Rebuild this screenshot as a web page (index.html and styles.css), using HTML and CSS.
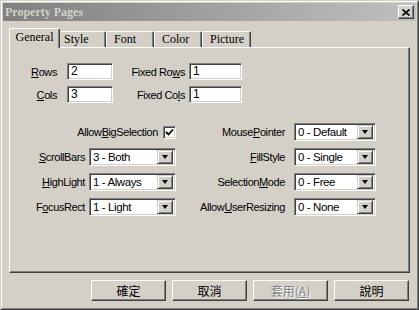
FILE: index.html
```html
<!DOCTYPE html>
<html><head>
<meta charset="utf-8">
<title>Property Pages</title>
<link rel="stylesheet" href="styles.css">
</head><body>
<div class="window">
  <div class="frame">
    <div class="titlebar">
      <span class="title">Property Pages</span>
      <span class="close"><svg width="8" height="7" viewBox="0 0 8 7"><path d="M0.5 0.5 L7.5 6.5 M7.5 0.5 L0.5 6.5" stroke="#000" stroke-width="1.6" fill="none"/></svg></span>
    </div>
    <div class="tabs">
      <div class="tab active">General</div>
      <div class="tab tab-style">Style</div>
      <div class="tab">Font</div>
      <div class="tab">Color</div>
      <div class="tab tab-pic">Picture</div>
    </div>
    <div class="panel">
      <div class="grid-top">
        <label class="lbl"><u>R</u>ows</label><div class="edit">2</div>
        <label class="lbl lbl-fixed">Fixed Ro<u>w</u>s</label><div class="edit">1</div>
        <label class="lbl"><u>C</u>ols</label><div class="edit">3</div>
        <label class="lbl lbl-fixed">Fixed Co<u>l</u>s</label><div class="edit">1</div>
      </div>
      <div class="grid-props">
        <div class="check-row">
          <span>Allow<u>B</u>igSelection</span>
          <span class="check"><svg width="9" height="9" viewBox="0 0 9 9"><path d="M1 4 L3.5 6.5 L8 1.5" stroke="#000" stroke-width="1.8" fill="none"/></svg></span>
        </div>
        <label class="lbl lbl-right">Mouse<u>P</u>ointer</label>
        <div class="combo"><span>0 - Default</span><span class="drop"></span></div>

        <label class="lbl lbl-left"><u>S</u>crollBars</label>
        <div class="combo"><span>3 - Both</span><span class="drop"></span></div>
        <label class="lbl lbl-right"><u>F</u>illStyle</label>
        <div class="combo"><span>0 - Single</span><span class="drop"></span></div>

        <label class="lbl lbl-left"><u>H</u>ighLight</label>
        <div class="combo"><span>1 - Always</span><span class="drop"></span></div>
        <label class="lbl lbl-right">Selection<u>M</u>ode</label>
        <div class="combo"><span>0 - Free</span><span class="drop"></span></div>

        <label class="lbl lbl-left">F<u>o</u>cusRect</label>
        <div class="combo"><span>1 - Light</span><span class="drop"></span></div>
        <label class="lbl lbl-right">Allow<u>U</u>serResizing</label>
        <div class="combo"><span>0 - None</span><span class="drop"></span></div>
      </div>
    </div>
    <div class="buttons">
      <div class="btn">確定</div>
      <div class="btn">取消</div>
      <div class="btn disabled">套用(<u>A</u>)</div>
      <div class="btn">說明</div>
    </div>
  </div>
</div>
</body></html>
```

FILE: styles.css
```css
body {margin: 0; background: #d4d0c8; font-family: "Liberation Sans", Arial, sans-serif; font-size: 11px; color: #000;}
.window {width: 419px; height: 310px; box-sizing: border-box; background: #d4d0c8; border: 1px solid; border-color: #d4d0c8 #404040 #404040 #d4d0c8;}
.frame {height: 100%; box-sizing: border-box; border: 1px solid; border-color: #fff #808080 #808080 #fff; padding: 1px;}

.titlebar {height: 18px; display: flex; align-items: center; justify-content: space-between; background: linear-gradient(to right, #808080, #c0c0c0);}
.title {padding-left: 2px; color: #d4d0c8; font: bold 12px "Liberation Serif", "Times New Roman", serif;}
.close {width: 16px; height: 14px; box-sizing: border-box; margin-right: 2px; display: flex; align-items: center; justify-content: center; background: #d4d0c8; border: 1px solid; border-color: #fff #404040 #404040 #fff; box-shadow: inset -1px -1px #808080;}

.tabs {display: flex; align-items: flex-end; height: 20px; margin: 7px 6px 0;}
.tab {position: relative; height: 16px; margin-bottom: 1px; box-sizing: border-box; width: 48px; padding-left: 7px; font: 12px "Liberation Serif", "Times New Roman", serif; line-height: 15px; border: 1px solid; border-bottom: none; border-color: #fff #404040 #fff #fff; border-radius: 2px 2px 0 0; box-shadow: inset -1px 0 #808080;}
.tab.active {z-index: 1; height: 20px; margin-bottom: 0; width: 51px; padding-left: 0; text-align: center; line-height: 17px; background: #d4d0c8;}
.tab-style {width: 46px; padding-left: 4px; border-left: none;}
.tab-pic {width: 49px;}

.panel {height: 226px; margin: -1px 6px 0; box-sizing: border-box; border: 1px solid; border-color: #fff #404040 #404040 #fff; box-shadow: inset -1px -1px #808080; letter-spacing: -0.4px;}

.grid-top {display: grid; grid-template-columns: 57px 46px 76px 53px; grid-auto-rows: 17px; row-gap: 6px; margin-top: 15px;}
.lbl {display: flex; align-items: center; justify-content: flex-end; padding-right: 10px;}
.lbl-fixed {padding-right: 4px;}
.lbl-left {padding-right: 4px;}
.lbl-right {padding-right: 9px;}
.edit {box-sizing: border-box; background: #fff; border: 1px solid; border-color: #808080 #fff #fff #808080; box-shadow: inset 1px 1px #404040, inset -1px -1px #d4d0c8; padding-left: 3px; font-size: 12px; line-height: 15px;}

.grid-props {display: grid; grid-template-columns: 79px 87px 118px 82px; grid-auto-rows: 18px; row-gap: 7px; margin-top: 20px;}
.check-row {grid-column: 1 / 3; display: flex; align-items: center; justify-content: flex-end; gap: 5px;}
.check {width: 13px; height: 13px; box-sizing: border-box; display: flex; align-items: center; justify-content: center; background: #fff; border: 1px solid; border-color: #808080 #fff #fff #808080; box-shadow: inset 1px 1px #404040, inset -1px -1px #d4d0c8;}
.combo {display: flex; align-items: center; justify-content: space-between; box-sizing: border-box; background: #fff; border: 1px solid; border-color: #808080 #fff #fff #808080; box-shadow: inset 1px 1px #404040, inset -1px -1px #d4d0c8; padding: 2px 2px 2px 3px; font-size: 11.5px;}
.drop {width: 16px; height: 14px; box-sizing: border-box; display: flex; align-items: center; justify-content: center; background: #d4d0c8; border: 1px solid; border-color: #d4d0c8 #404040 #404040 #d4d0c8; box-shadow: inset 1px 1px #fff, inset -1px -1px #808080;}
.drop::after {content: ""; border-style: solid; border-width: 4px 3.5px 0; border-color: #000 transparent transparent;}

.buttons {display: flex; justify-content: flex-end; gap: 6px; margin: 7px 7px 0 0;}
.btn {width: 75px; height: 21px; box-sizing: border-box; display: flex; align-items: center; justify-content: center; border: 1px solid; border-color: #fff #404040 #404040 #fff; box-shadow: inset -1px -1px #808080; font: 12px "Noto Sans CJK TC", sans-serif;}
.btn.disabled {color: #808080; text-shadow: 1px 1px #fff;}
```
